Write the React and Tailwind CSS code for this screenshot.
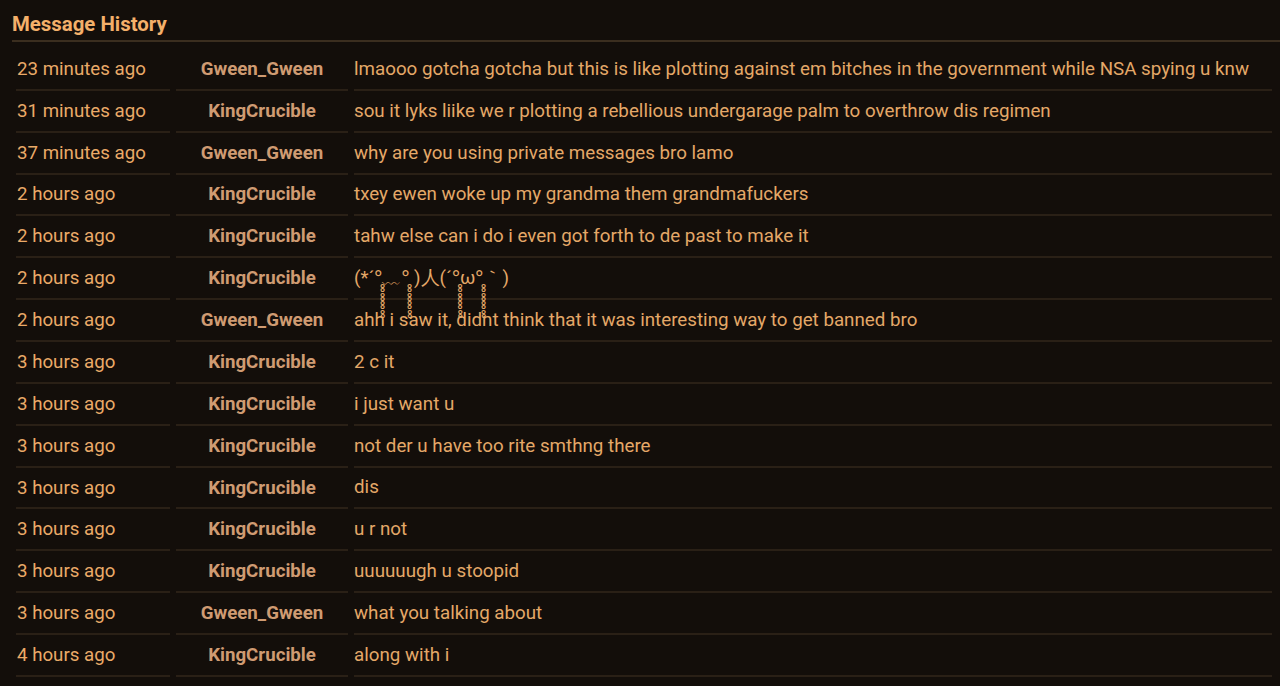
import React from 'react'

const ROWS = [
  ['23 minutes ago', 'Gween_Gween', 'lmaooo gotcha gotcha but this is like plotting against em bitches in the government while NSA spying u knw'],
  ['31 minutes ago', 'KingCrucible', 'sou it lyks liike we r plotting a rebellious undergarage palm to overthrow dis regimen'],
  ['37 minutes ago', 'Gween_Gween', 'why are you using private messages bro lamo'],
  ['2 hours ago', 'KingCrucible', 'txey ewen woke up my grandma them grandmafuckers'],
  ['2 hours ago', 'KingCrucible', 'tahw else can i do i even got forth to de past to make it'],
  ['2 hours ago', 'KingCrucible', '(*´°̥̥̥̥̥̥̥̥﹏°̥̥̥̥̥̥̥̥ )人(´°̥̥̥̥̥̥̥̥ω°̥̥̥̥̥̥̥̥｀)'],
  ['2 hours ago', 'Gween_Gween', 'ahh i saw it, didnt think that it was interesting way to get banned bro'],
  ['3 hours ago', 'KingCrucible', '2 c it'],
  ['3 hours ago', 'KingCrucible', 'i just want u'],
  ['3 hours ago', 'KingCrucible', 'not der u have too rite smthng there'],
  ['3 hours ago', 'KingCrucible', 'dis'],
  ['3 hours ago', 'KingCrucible', 'u r not'],
  ['3 hours ago', 'KingCrucible', 'uuuuuugh u stoopid'],
  ['3 hours ago', 'Gween_Gween', 'what you talking about'],
  ['4 hours ago', 'KingCrucible', 'along with i'],
]

export default function App() {
  return (
    <div className="min-h-[686px] bg-[#130e0a] pl-3 pt-[10px] text-[#e9ab6a]" style={{ fontFamily: 'Roboto, "Noto Sans", sans-serif' }}>
      <h2 className="text-[20.4px] font-bold leading-[28px] text-[#f4b06a]">Message History</h2>
      <div className="mt-[2px] h-[2px] bg-[#3b2e1f]" />
      <table className="w-full border-separate border-spacing-x-[6px] border-spacing-y-0 -ml-[2px] mt-[7px] text-[18.7px]">
        <tbody>
          {ROWS.map(([time, user, msg], i) => (
            <tr key={i}>
              <td className="h-[41.86px] w-[154px] border-b-2 border-[#2a2016] pl-[1px] whitespace-nowrap text-[#eaaa68]">{time}</td>
              <td className="h-[41.86px] w-[172px] border-b-2 border-[#2a2016] text-center font-bold whitespace-nowrap text-[#cf9b72]">{user}</td>
              <td className="h-[41.86px] border-b-2 border-[#2a2016] whitespace-nowrap text-[18.75px] text-[#e4a868]">{msg}</td>
            </tr>
          ))}
        </tbody>
      </table>
    </div>
  )
}
